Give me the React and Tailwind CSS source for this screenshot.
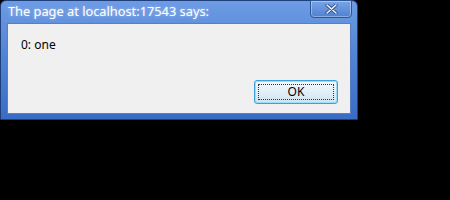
export default function App() {
  return (
    <div className="w-[450px] h-[200px] bg-black" style={{ fontFamily: '"Noto Sans", "Open Sans", sans-serif' }}>
      {/* Window frame */}
      <div className="w-[358px] h-[120px] flex flex-col rounded-t-[6px] border border-[#1f3f7a] bg-gradient-to-b from-[#6d9be4] via-[#4f82d4] to-[#3a6cc6]">
        {/* Title bar */}
        <div className="h-[22px] flex items-start justify-between pl-[7px]">
          <span className="text-white text-[12.8px] leading-none mt-[4px] [text-shadow:0_0_3px_rgba(255,255,255,0.5)]">
            The page at localhost:17543 says:
          </span>
          <div className="w-[42px] h-[18px] mr-[5px] -mt-px rounded-b-[4px] border border-[#2d5495] bg-gradient-to-b from-[#7aa4e6] to-[#4f80d2] flex items-center justify-center shadow-[inset_0_0_0_1px_rgba(255,255,255,0.35)]">
            <svg width="13" height="10" viewBox="0 0 13 10">
              <path d="M2 1 L11 9 M11 1 L2 9" stroke="#2b4a80" strokeWidth="3.2" strokeLinecap="round" />
              <path d="M2 1 L11 9 M11 1 L2 9" stroke="#eef4ff" strokeWidth="1.6" strokeLinecap="round" />
            </svg>
          </div>
        </div>
        {/* Client area */}
        <div className="flex-1 mx-[6px] mb-[5px] bg-[#f0f0f0] border border-[#5a7fbf] flex flex-col">
          <p className="text-[12px] text-black pl-[13px] pt-[15px] leading-none">0: one</p>
          <div className="flex-1 flex items-end justify-end pr-[12px] pb-[9px]">
            <button className="w-[84px] h-[24px] rounded-[3px] border border-[#3c9fd8] bg-gradient-to-b from-[#f2f9fd] via-[#e2eef6] to-[#cfe3ef] shadow-[inset_0_0_0_1px_#9fdcf8] flex items-center justify-center p-[3px]">
              <span className="w-full h-full border border-dotted border-[#333] flex items-center justify-center text-[12px] text-black leading-none">
                OK
              </span>
            </button>
          </div>
        </div>
      </div>
    </div>
  )
}
